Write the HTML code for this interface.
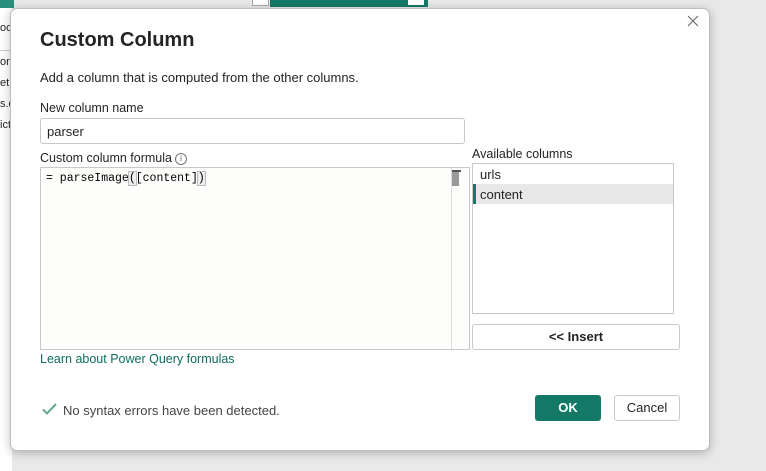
<!DOCTYPE html>
<html><head><meta charset="utf-8"><style>
*{box-sizing:border-box;margin:0;padding:0}
body{width:766px;height:471px;overflow:hidden;background:#e9e9e9;font-family:"Liberation Sans",sans-serif;color:#252423;position:relative}
.a{position:absolute}
.dlg{left:10px;top:8px;width:700px;height:443px;background:#fff;border-radius:7px;box-shadow:0 2px 10px rgba(0,0,0,.25);border:1px solid #bdbdbd}
.t{font-size:13px}
</style></head><body>
<div class="a" style="left:0;top:0;width:12px;height:471px;background:#fff"></div>
<div class="a" style="left:0;top:0;width:14px;height:8px;background:#2b8f7d"></div>
<div class="a t" style="left:0;top:22px;font-size:11px">oc</div>
<div class="a" style="left:0;top:50px;width:10px;border-top:1px solid #ccc"></div>
<div class="a t" style="left:0;top:56px;font-size:11px">on</div>
<div class="a t" style="left:0;top:77px;font-size:11px">et</div>
<div class="a t" style="left:0;top:98px;font-size:11px">s.c</div>
<div class="a t" style="left:0;top:119px;font-size:11px">ict</div>
<div class="a" style="left:252px;top:0;width:17px;height:6px;border:1px solid #aaa;border-top:0;background:#fff"></div>
<div class="a" style="left:270px;top:0;width:158px;height:7px;background:#147a67"></div>
<div class="a" style="left:408px;top:0;width:16px;height:5px;background:#fff"></div>
<div class="a dlg"></div>
<svg class="a" style="left:687px;top:15px" width="12" height="12" viewBox="0 0 12 12"><path d="M1 1L11 11M11 1L1 11" stroke="#666" stroke-width="1.1"/></svg>
<div class="a" style="left:40px;top:29px;font-size:20px;font-weight:bold;color:#252423">Custom Column</div>
<div class="a t" style="left:40px;top:70px">Add a column that is computed from the other columns.</div>
<div class="a t" style="left:40px;top:101px;font-size:12.5px">New column name</div>
<div class="a" style="left:40px;top:118px;width:425px;height:26px;border:1px solid #c8c8c8;border-radius:3px;padding:5px 6px;font-size:13px">parser</div>
<div class="a t" style="left:40px;top:151px;font-size:12.5px">Custom column formula</div>
<div class="a" style="left:175px;top:153px;width:12px;height:12px;border:1px solid #777;border-radius:50%;font-size:8px;text-align:center;line-height:10px;color:#555">i</div>
<div class="a" style="left:40px;top:167px;width:430px;height:183px;border:1px solid #c8c8c8;background:#fdfdfb"></div>
<div class="a" style="left:451px;top:168px;width:1px;height:181px;background:#ddd"></div>
<div class="a" style="left:452px;top:170px;width:9px;height:2px;background:#555"></div>
<div class="a" style="left:452px;top:172px;width:7px;height:14px;background:#999"></div>
<div class="a" style="left:46px;top:172px;font-family:'Liberation Mono',monospace;font-size:11.5px;color:#000">= parseImage<span style="outline:1px solid #bbb;background:#eee">(</span>[content]<span style="outline:1px solid #bbb;background:#eee">)</span></div>
<div class="a t" style="left:472px;top:147px;font-size:12.5px">Available columns</div>
<div class="a" style="left:472px;top:163px;width:202px;height:151px;border:1px solid #c8c8c8"></div>
<div class="a t" style="left:480px;top:167px">urls</div>
<div class="a" style="left:473px;top:184px;width:200px;height:20px;background:#e8e8e8;border-left:3px solid #147a67"></div>
<div class="a t" style="left:480px;top:187px">content</div>
<div class="a" style="left:472px;top:324px;width:208px;height:26px;border:1px solid #c8c8c8;border-radius:3px;text-align:center;line-height:24px;font-size:13px;font-weight:bold">&lt;&lt; Insert</div>
<div class="a" style="left:40px;top:352px;font-size:12.5px;color:#0f6d5d">Learn about Power Query formulas</div>
<svg class="a" style="left:42px;top:403px" width="15" height="12" viewBox="0 0 15 12"><path d="M1 6.5L5 10.5L14 1" stroke="#5fa894" stroke-width="2" fill="none"/></svg>
<div class="a t" style="left:63px;top:403px;color:#444">No syntax errors have been detected.</div>
<div class="a" style="left:535px;top:395px;width:66px;height:26px;background:#147a67;border-radius:3px;color:#fff;font-weight:bold;font-size:13px;text-align:center;line-height:26px">OK</div>
<div class="a" style="left:614px;top:395px;width:66px;height:26px;border:1px solid #c8c8c8;border-radius:3px;font-size:13px;text-align:center;line-height:24px">Cancel</div>
</body></html>
